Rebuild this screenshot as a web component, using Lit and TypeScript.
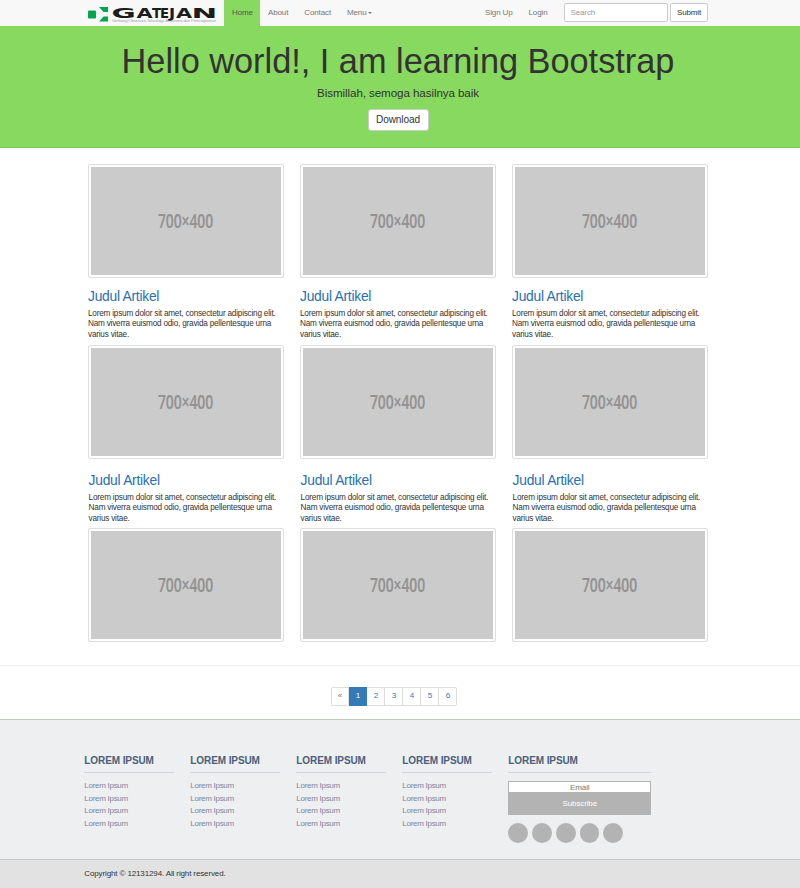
import { LitElement, html, css, svg } from "lit";
import { customElement } from "lit/decorators.js";

const LOREM = ["Lorem ipsum dolor sit amet, consectetur adipiscing elit.", "Nam viverra euismod odio, gravida pellentesque urna", "varius vitae."];

// Wordmark letters with their left edge and drawn width.
const WORD: [string, number, number][] = [["G", 23.5, 24], ["A", 48.5, 16], ["T", 64, 9], ["E", 72, 9], ["J", 81, 6], ["A", 88, 16], ["N", 103.5, 25.5]];

@customElement("site-logo")
class SiteLogo extends LitElement {
  static styles = css`
    :host { display: block; width: 130px; height: 18px; }
    svg { display: block; overflow: visible; }
    .word { font: bold 13.5px "DejaVu Sans", "Liberation Sans", sans-serif; fill: #1c1c1c; }
    .tag { font: 3.8px "Liberation Sans", sans-serif; fill: #a3a3a3; }
  `;
  render() {
    return html`<svg width="130" height="18" viewBox="0 0 130 18">
      <rect x="0" y="4.5" width="8" height="8" rx="1" fill="#06a54e" />
      <path d="M11 1H20V6H15.5Z M11 15.5H20V10.5H15.5Z" fill="#06a54e" />
      <text class="word" y="12">${WORD.map(([c, x, w]) => svg`<tspan x=${x} textLength=${w} lengthAdjust="spacingAndGlyphs">${c}</tspan>`)}</text>
      <text class="tag" x="24" y="16.2" textLength="104" lengthAdjust="spacingAndGlyphs">Gerbang Observasi Teknologi, Anasisma dan Pemrograman</text>
    </svg>`;
  }
}

@customElement("article-card")
class ArticleCard extends LitElement {
  static styles = css`
    :host { display: block; width: 196px; }
    .thumb { box-sizing: border-box; height: 114px; border: 1px solid #ddd; border-radius: 2px; padding: 2px; background: #fff; }
    .image { display: block; width: 100%; height: 100%; background: #cbcbcb; }
    .size { font: 600 19px "Open Sans", "Liberation Sans", sans-serif; fill: #929292; stroke: #929292; stroke-width: 0.2px; }
    h3 { margin: 11px 0 0; font-size: 13.8px; line-height: 15px; letter-spacing: -0.25px; font-weight: 400; color: #286fb3; }
    p { margin: 5px 0 0; font-size: 8.2px; line-height: 10.3px; letter-spacing: -0.21px; color: #333; white-space: nowrap; }
    :host([low]) h3 { margin: 14px 0 0 0.6px; }
    :host([low]) p { margin: 5px 0 0 0.6px; }
  `;
  static properties = { bare: { type: Boolean } };
  declare bare: boolean;
  render() {
    return html`<div class="thumb">
        <svg class="image" viewBox="0 0 190 108">
          <text class="size" x="67" y="60.8" textLength="55" lengthAdjust="spacingAndGlyphs">700×400</text>
        </svg>
      </div>
      ${this.bare ? null : html`<h3>Judul Artikel</h3><p>${LOREM.map((l) => html`${l}<br />`)}</p>`}`;
  }
}

@customElement("app-root")
class AppRoot extends LitElement {
  static styles = css`
    :host { display: block; height: 888px; overflow: hidden; background: #fff; color: #333; font: 8px/10.6px "Liberation Sans", Arial, sans-serif; letter-spacing: -0.125px; }
    * { box-sizing: border-box; }
    nav { display: flex; height: 26px; padding: 0 92px 0 88px; background: #f8f8f8; color: #777; }
    site-logo { margin-top: 6px; flex: none; }
    .links { display: flex; margin-left: 6px; }
    .link { display: flex; align-items: center; padding: 0 8px; height: 26px; }
    .active { width: 36px; background: #88d960; color: #555; }
    .caret { margin-left: 1px; border: 2px solid transparent; border-top-color: #777; border-bottom: 0; }
    .right { margin-left: auto; }
    .search { display: flex; gap: 2px; margin: 3px 0 0 8px; }
    input { margin: 0; font: inherit; letter-spacing: inherit; outline: none; }
    .search input { width: 104.5px; height: 19px; padding: 0 6px; border: 1px solid #ccc; border-radius: 2px; background: #fff; }
    input::placeholder { color: #999; opacity: 1; }
    button { margin: 0; padding: 0; font: inherit; letter-spacing: inherit; }
    .search button { width: 38px; height: 19px; padding-top: 1px; border: 1px solid #ccc; border-radius: 2px; background: #fff; color: #333; }
    .hero { display: flex; flex-direction: column; align-items: center; height: 122px; padding-right: 4px; background: #88d960; border-bottom: 1px solid #75cb53; }
    h1 { margin: 15px 0 0; font-size: 34.3px; line-height: 40px; letter-spacing: 0; font-weight: 400; white-space: nowrap; }
    .lead { margin: 5px 0 0; font-size: 11.6px; line-height: 14px; letter-spacing: -0.08px; }
    .download { width: 61px; height: 22px; margin-top: 9px; border: 1px solid #ccc; border-radius: 3px; background: #fff; color: #333; font-size: 10.1px; }
    .grid { display: grid; grid-template-columns: repeat(3, 196px); column-gap: 16px; padding-left: 88px; }
    .first { margin-top: 16px; height: 181px; }
    .second { height: 183px; }
    .third { height: 137px; padding-left: 88.4px; }
    .pages { display: flex; justify-content: center; height: 54px; padding: 21px 12px 0 0; border-top: 1px solid #eee; }
    .page { width: 18px; height: 19px; border: 1px solid #ddd; border-left-width: 0; text-align: center; line-height: 16px; color: #337ab7; }
    .page:first-child { width: 18.6px; border-left-width: 1px; border-radius: 2px 0 0 2px; color: #777; }
    .page:last-child { border-radius: 0 2px 2px 0; }
    .current { background: #337ab7; border-color: #337ab7; color: #fff; }
    footer { display: flex; gap: 16px; height: 140px; padding: 33px 0 0 84.3px; background: #edeff1; border-top: 1px solid #bfc9bb; }
    .col { width: 90px; }
    .wide { width: 143px; }
    h4 { margin: 0 0 7px; height: 20px; padding-top: 2px; border-bottom: 1px solid #cfd3da; font-size: 10px; line-height: 12px; letter-spacing: -0.09px; font-weight: 700; color: #4a607c; white-space: nowrap; }
    .item { line-height: 12.5px; height: 12.5px; letter-spacing: -0.28px; color: #7e84a0; }
    .mail { display: block; width: 143px; height: 12px; margin-top: 8px; padding: 0; border: 1px solid #b3b3b3; text-align: center; background: #fff; }
    .mail::placeholder { color: #757575; }
    .subscribe { display: block; width: 143px; height: 22px; border: 0; background: #b3b3b3; color: #fff; }
    .dots { display: flex; gap: 4px; margin-top: 8px; }
    .dot { width: 19.8px; height: 19.8px; border-radius: 50%; background: #b3b3b3; }
    .copy { height: 29px; padding: 9px 0 0 84.3px; border-top: 1px solid #c9c9c9; background: #e2e2e2; }
  `;
  render() {
    const cards = (bare = false, low = false) => [0, 1, 2].map(() => html`<article-card ?bare=${bare} .bare=${bare} ?low=${low}></article-card>`);
    return html`
      <nav>
        <site-logo></site-logo>
        <div class="links"><span class="link active">Home</span><span class="link">About</span><span class="link">Contact</span><span class="link">Menu<i class="caret"></i></span></div>
        <div class="links right"><span class="link">Sign Up</span><span class="link">Login</span></div>
        <div class="search"><input placeholder="Search" /><button>Submit</button></div>
      </nav>
      <section class="hero"><h1>Hello world!, I am learning Bootstrap</h1><p class="lead">Bismillah, semoga hasilnya baik</p><button class="download">Download</button></section>
      <section class="grid first">${cards()}</section>
      <section class="grid second">${cards(false, true)}</section>
      <section class="grid third">${cards(true)}</section>
      <div class="pages">${["«", "1", "2", "3", "4", "5", "6"].map((p) => html`<span class="page ${p === "1" ? "current" : ""}">${p}</span>`)}</div>
      <footer>
        ${[0, 1, 2, 3].map(() => html`<div class="col"><h4>LOREM IPSUM</h4>${[0, 1, 2, 3].map(() => html`<div class="item">Lorem Ipsum</div>`)}</div>`)}
        <div class="wide"><h4>LOREM IPSUM</h4><input class="mail" placeholder="Email" /><button class="subscribe">Subscribe</button><div class="dots">${[0, 1, 2, 3, 4].map(() => html`<span class="dot"></span>`)}</div></div>
      </footer>
      <div class="copy">Copyright © 12131294. All right reserved.</div>
    `;
  }
}
